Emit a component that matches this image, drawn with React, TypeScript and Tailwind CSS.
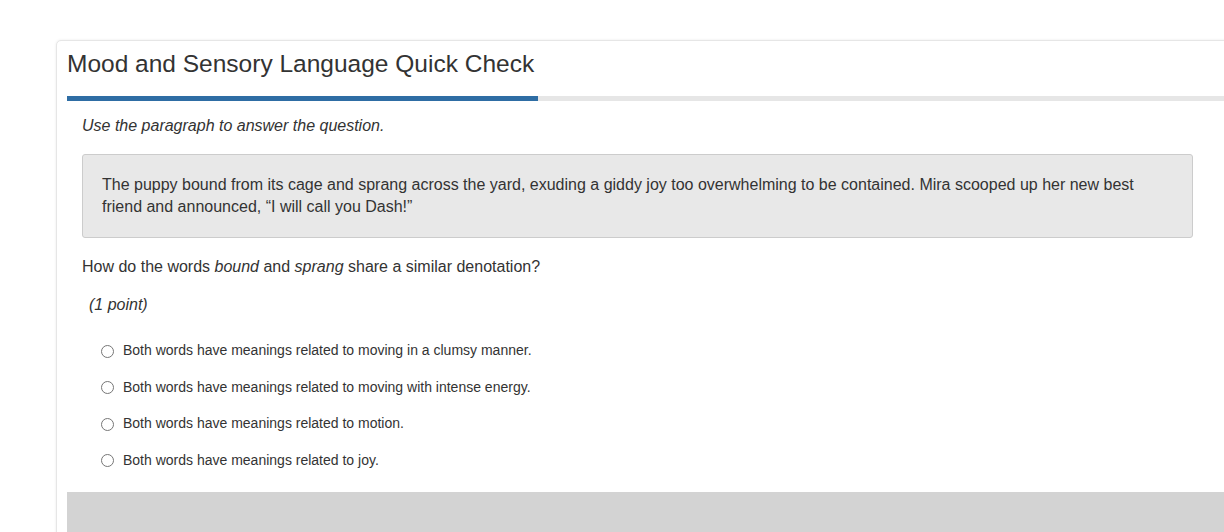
import React from "react";

const options = [
  "Both words have meanings related to moving in a clumsy manner.",
  "Both words have meanings related to moving with intense energy.",
  "Both words have meanings related to motion.",
  "Both words have meanings related to joy.",
];

export default function App() {
  return (
    <div
      className="h-[532px] overflow-hidden bg-white pl-[56px] pt-[40px] text-[#333]"
      style={{ fontFamily: '"Liberation Sans", Arial, sans-serif' }}
    >
      <div className="w-[1200px] h-[520px] rounded-tl-[5px] border border-[#e6e6e6] bg-white pl-[10px] pt-[10px] shadow-[0_0_3px_rgba(0,0,0,0.08)]">
        <h1 className="text-[24.5px] leading-[26px] font-normal text-[#333]">
          Mood and Sensory Language Quick Check
        </h1>
        <div className="mt-[19px] h-[5px] bg-[#e6e6e6]">
          <div className="h-full w-[471px] bg-[#2e6da4]" />
        </div>
        <div className="pl-[15px]">
          <p className="mt-[15px] text-[16px] leading-[20px] italic">
            Use the paragraph to answer the question.
          </p>
          <div className="mt-[18px] w-[1111px] rounded-[3px] border border-[#cccccc] bg-[#e8e8e8] px-[19px] py-[19px] text-[16px] leading-[22px]">
            The puppy bound from its cage and sprang across the yard, exuding a giddy joy too overwhelming to be contained. Mira scooped up her new best friend and announced, “I will call you Dash!”
          </div>
          <p className="mt-[18px] text-[16px] leading-[22px]">
            How do the words <i>bound</i> and <i>sprang</i> share a similar denotation?
          </p>
          <p className="ml-[7px] mt-[17px] text-[16px] leading-[20px] italic">(1 point)</p>
          <div className="mt-[25px] flex flex-col gap-[16.67px] pl-[19px]">
            {options.map((o) => (
              <label key={o} className="flex items-center gap-[9px] text-[14px] leading-[20px]">
                <span className="mt-[2px] block h-[13px] w-[13px] rounded-full border border-[#767676] bg-white" />
                <span>{o}</span>
              </label>
            ))}
          </div>
        </div>
        <div className="mt-[22.5px] h-[60px] bg-[#d3d3d3]" />
      </div>
    </div>
  );
}
